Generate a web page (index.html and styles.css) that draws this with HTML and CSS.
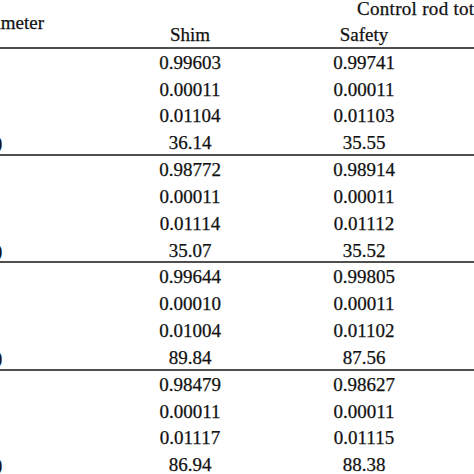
FILE: index.html
```html
<!DOCTYPE html>
<html lang="en">
<head>
<meta charset="utf-8">
<title>Control rod total worth</title>
<link rel="stylesheet" href="styles.css">
</head>
<body>
<div class="crop">
  <table class="data">
    <colgroup>
      <col class="c-label">
      <col class="c-val">
      <col class="c-val">
      <col class="c-val">
    </colgroup>
    <thead>
      <tr class="head-top">
        <th rowspan="2" class="param">Parameter</th>
        <th colspan="3" class="group">Control rod total worth</th>
      </tr>
      <tr class="head-sub">
        <th>Shim</th>
        <th>Safety</th>
        <th></th>
      </tr>
    </thead>
    <tbody>
      <tr><td class="lbl">k<sub>eff</sub></td><td>0.99603</td><td>0.99741</td><td></td></tr>
      <tr><td class="lbl">σ</td><td>0.00011</td><td>0.00011</td><td></td></tr>
      <tr><td class="lbl">β<sub>eff</sub></td><td>0.01104</td><td>0.01103</td><td></td></tr>
      <tr><td class="lbl">Λ (μs)</td><td>36.14</td><td>35.55</td><td></td></tr>
    </tbody>
    <tbody>
      <tr><td class="lbl">k<sub>eff</sub></td><td>0.98772</td><td>0.98914</td><td></td></tr>
      <tr><td class="lbl">σ</td><td>0.00011</td><td>0.00011</td><td></td></tr>
      <tr><td class="lbl">β<sub>eff</sub></td><td>0.01114</td><td>0.01112</td><td></td></tr>
      <tr><td class="lbl">Λ (μs)</td><td>35.07</td><td>35.52</td><td></td></tr>
    </tbody>
    <tbody>
      <tr><td class="lbl">k<sub>eff</sub></td><td>0.99644</td><td>0.99805</td><td></td></tr>
      <tr><td class="lbl">σ</td><td>0.00010</td><td>0.00011</td><td></td></tr>
      <tr><td class="lbl">β<sub>eff</sub></td><td>0.01004</td><td>0.01102</td><td></td></tr>
      <tr><td class="lbl">Λ (μs)</td><td>89.84</td><td>87.56</td><td></td></tr>
    </tbody>
    <tbody>
      <tr><td class="lbl">k<sub>eff</sub></td><td>0.98479</td><td>0.98627</td><td></td></tr>
      <tr><td class="lbl">σ</td><td>0.00011</td><td>0.00011</td><td></td></tr>
      <tr><td class="lbl">β<sub>eff</sub></td><td>0.01117</td><td>0.01115</td><td></td></tr>
      <tr><td class="lbl">Λ (μs)</td><td>86.94</td><td>88.38</td><td></td></tr>
    </tbody>
  </table>
</div>
</body>
</html>
```

FILE: styles.css
```css
html, body {
  margin: 0;
  padding: 0;
  background: #ffffff;
  overflow: hidden;
}

.crop {
  width: 474px;
  height: 474px;
  overflow: hidden;
}

.data {
  margin-top: -3.4px;
  margin-left: -60px;
  border-collapse: separate;
  border-spacing: 0;
  table-layout: fixed;
  width: 685px;
  font-family: "Liberation Serif", "Times New Roman", serif;
  font-size: 19px;
  color: #111111;
  -webkit-text-stroke: 0.25px #111111;
}

.c-label { width: 163px; }
.c-val { width: 174px; }

.data th {
  font-weight: normal;
  padding: 0;
  white-space: nowrap;
}

.head-top th {
  line-height: 24px;
}

.head-top .group {
  text-align: left;
  padding-left: 254px;
  letter-spacing: 0.3px;
}

.head-top .param {
  text-align: left;
  padding-left: 27px;
  padding-top: 2px;
  vertical-align: middle;
}

.head-sub th {
  padding-top: 2px;
  line-height: 24.15px;
  text-align: center;
}

.data td {
  padding: 6px 0 0;
  line-height: 20.83px;
  text-align: center;
  white-space: nowrap;
}

.data td.lbl {
  text-align: left;
  padding-left: 14px;
}

.data tbody tr:first-child td {
  border-top: 2px solid #4f4f4f;
  padding-top: 4px;
}

.data sub {
  font-size: 0.7em;
  line-height: 0;
}
```
